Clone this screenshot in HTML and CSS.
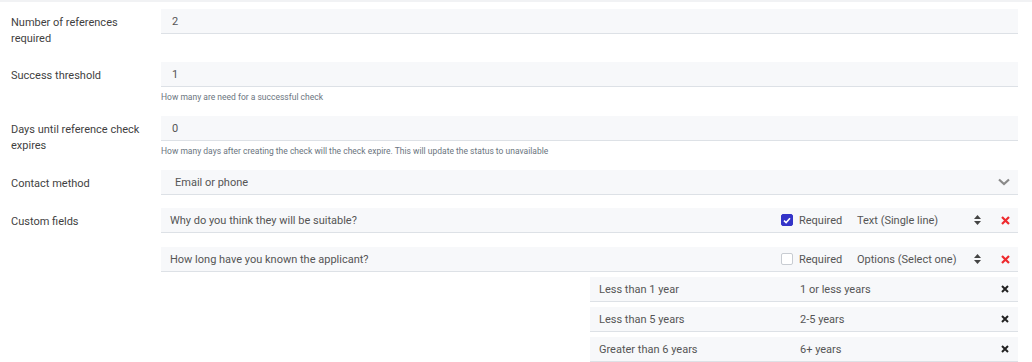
FILE: index.html
```html
<!DOCTYPE html>
<html lang="en">
<head>
  <meta charset="UTF-8">
  <meta name="viewport" content="width=device-width, initial-scale=1.0">
  <title>Reference check settings</title>
  <link rel="stylesheet" href="styles.css">
</head>
<body>
  <div class="settings">

    <div class="form-row first">
      <label class="form-label">Number of references required</label>
      <div class="form-field">
        <div class="input">2</div>
      </div>
    </div>

    <div class="form-row">
      <label class="form-label">Success threshold</label>
      <div class="form-field">
        <div class="input">1</div>
        <p class="help">How many are need for a successful check</p>
      </div>
    </div>

    <div class="form-row">
      <label class="form-label">Days until reference check expires</label>
      <div class="form-field">
        <div class="input">0</div>
        <p class="help">How many days after creating the check will the check expire. This will update the status to unavailable</p>
      </div>
    </div>

    <div class="form-row contact">
      <label class="form-label">Contact method</label>
      <div class="form-field">
        <div class="input select">
          <span>Email or phone</span>
          <svg class="chevron" width="12" height="8" viewBox="0 0 12 8"><path d="M1 1.5 L6 6 L11 1.5" fill="none" stroke="#8a8a8a" stroke-width="2.2"/></svg>
        </div>
      </div>
    </div>

    <div class="form-row">
      <label class="form-label">Custom fields</label>
      <div class="form-field">

        <div class="custom-field">
          <div class="input grow">Why do you think they will be suitable?</div>
          <div class="input check">
            <span class="box checked">
              <svg width="8" height="7" viewBox="0 0 8 7"><path d="M1 3.6 L3.1 5.6 L7 1.2" fill="none" stroke="#fff" stroke-width="1.6"/></svg>
            </span>
            Required
          </div>
          <div class="input type">
            <span>Text (Single line)</span>
            <svg width="7" height="10" viewBox="0 0 7 10"><path d="M3.5 0 L7 4 H0 Z M3.5 10 L7 6 H0 Z" fill="#444"/></svg>
          </div>
          <div class="input remove">
            <svg width="9" height="9" viewBox="0 0 9 9"><path d="M1 1 L8 8 M8 1 L1 8" stroke="#ee2a2e" stroke-width="2.2"/></svg>
          </div>
        </div>

        <div class="custom-field">
          <div class="input grow">How long have you known the applicant?</div>
          <div class="input check">
            <span class="box"></span>
            Required
          </div>
          <div class="input type">
            <span>Options (Select one)</span>
            <svg width="7" height="10" viewBox="0 0 7 10"><path d="M3.5 0 L7 4 H0 Z M3.5 10 L7 6 H0 Z" fill="#444"/></svg>
          </div>
          <div class="input remove">
            <svg width="9" height="9" viewBox="0 0 9 9"><path d="M1 1 L8 8 M8 1 L1 8" stroke="#ee2a2e" stroke-width="2.2"/></svg>
          </div>
        </div>

        <div class="options">
          <div class="option">
            <div class="input opt-label">Less than 1 year</div>
            <div class="input opt-value">1 or less years</div>
            <div class="input remove">
              <svg width="8" height="8" viewBox="0 0 8 8"><path d="M1 1 L7 7 M7 1 L1 7" stroke="#222" stroke-width="2"/></svg>
            </div>
          </div>
          <div class="option">
            <div class="input opt-label">Less than 5 years</div>
            <div class="input opt-value">2-5 years</div>
            <div class="input remove">
              <svg width="8" height="8" viewBox="0 0 8 8"><path d="M1 1 L7 7 M7 1 L1 7" stroke="#222" stroke-width="2"/></svg>
            </div>
          </div>
          <div class="option">
            <div class="input opt-label">Greater than 6 years</div>
            <div class="input opt-value">6+ years</div>
            <div class="input remove">
              <svg width="8" height="8" viewBox="0 0 8 8"><path d="M1 1 L7 7 M7 1 L1 7" stroke="#222" stroke-width="2"/></svg>
            </div>
          </div>
        </div>

      </div>
    </div>

  </div>
</body>
</html>
```

FILE: styles.css
```css
/* Page */
body {
  margin: 0;
  font-family: Roboto, "Open Sans", sans-serif;
  font-size: 11px;
  color: #444;
  background: #fff;
}

.settings {
  border-top: 2px solid #f1f2f4;
  padding: 7px 14px 0 11px;
}

/* Label + field rows */
.form-row {
  display: grid;
  grid-template-columns: 150px 1fr;
  margin-bottom: 12px;
}

.form-row.first {
  min-height: 41px;
}

.form-row.contact {
  margin-bottom: 13px;
}

.form-label {
  padding-top: 6px;
  padding-right: 10px;
  line-height: 16px;
  color: #3f3f3f;
}

.form-field {
  min-width: 0;
}

/* Flat inputs */
.input {
  box-sizing: border-box;
  height: 25px;
  display: flex;
  align-items: center;
  padding: 0 11px;
  background: #f7f8fa;
  border-bottom: 1px solid #dde1e6;
  color: #555;
}

.help {
  margin: 0;
  padding-top: 4px;
  height: 13px;
  font-size: 8.5px;
  line-height: 13px;
  color: #6b7580;
}

.select {
  justify-content: space-between;
  padding-left: 14px;
  padding-right: 8px;
}

/* Custom fields */
.custom-field {
  display: flex;
  margin-bottom: 14px;
}

.grow {
  flex: 1;
  padding-left: 9px;
}

.check {
  width: 77px;
  padding-left: 10px;
  gap: 6px;
}

.box {
  box-sizing: border-box;
  flex-shrink: 0;
  width: 12px;
  height: 12px;
  border: 1px solid #c8ccd2;
  border-radius: 2px;
  background: #fff;
  display: flex;
  align-items: center;
  justify-content: center;
}

.box.checked {
  background: #3434c8;
  border-color: #3434c8;
}

.type {
  width: 144px;
  padding-left: 9px;
  justify-content: space-between;
}

.remove {
  width: 26px;
  justify-content: center;
  padding: 0;
}

/* Option list under a select field */
.options {
  margin-top: -9px;
  margin-left: 429px;
}

.option {
  display: flex;
  margin-bottom: 5px;
}

.opt-label {
  width: 201px;
  padding-left: 9px;
}

.opt-value {
  flex: 1;
  padding-left: 9px;
}
```
